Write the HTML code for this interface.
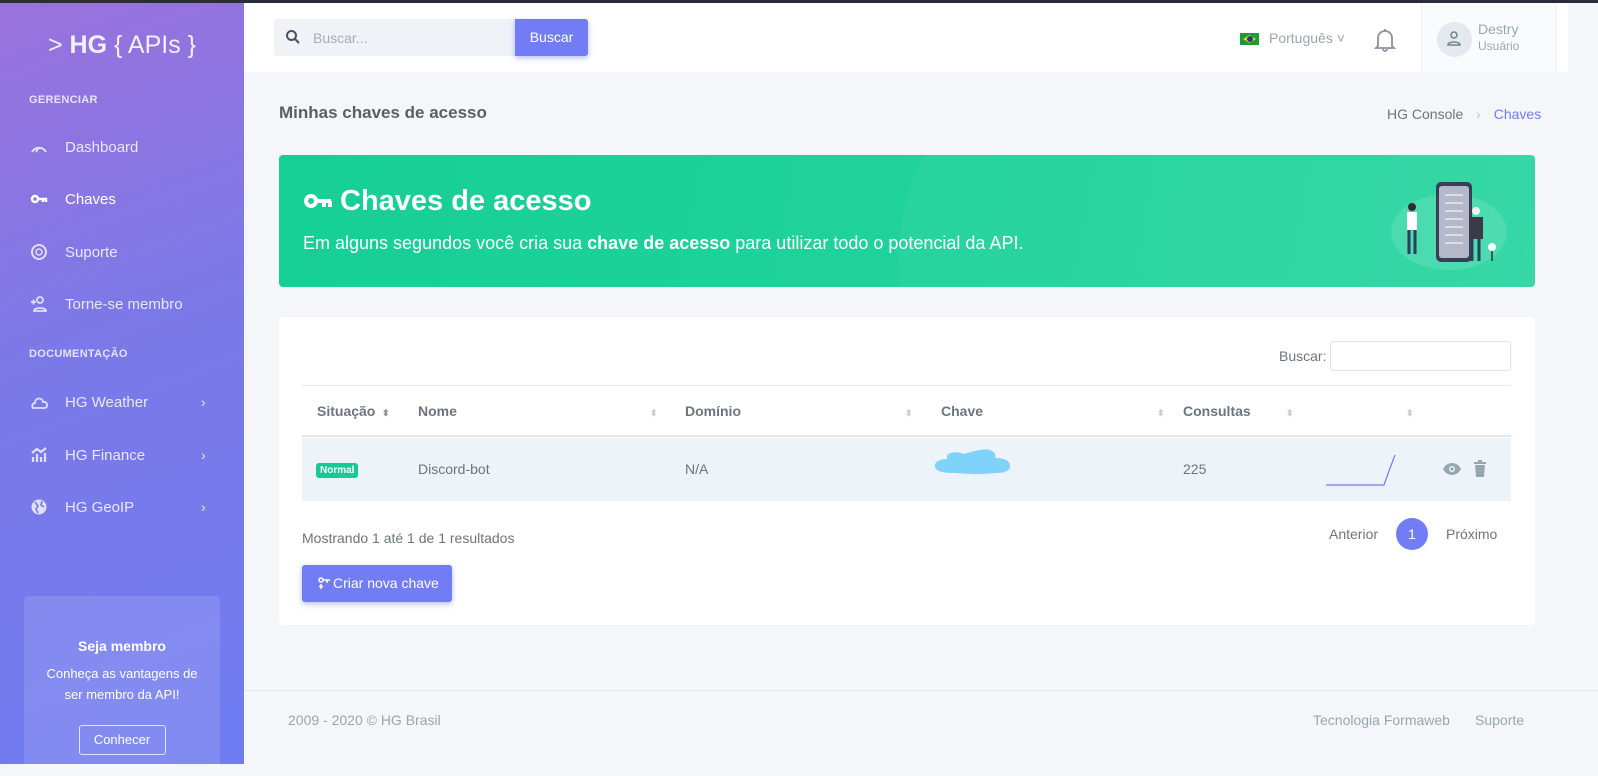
<!DOCTYPE html>
<html><head><meta charset="utf-8"><style>
*{box-sizing:border-box;margin:0;padding:0}
html{background:#f5f6fa}
body{width:1598px;height:764px;overflow:hidden;font-family:"Liberation Sans",sans-serif;background:#f5f6fa;position:relative;color:#495057}
.topline{position:absolute;left:0;top:0;width:1598px;height:3px;background:#2a2d38;z-index:5}
.side{position:absolute;left:0;top:3px;width:244px;height:761px;background:linear-gradient(160deg,#9a72dc 0%,#7b79e8 45%,#6f7cf2 100%);color:#fff}
.logo{position:absolute;top:28px;left:0;width:244px;text-align:center;font-size:25px;color:#f0f0ff}
.logo b{font-weight:bold}
.sec{position:absolute;left:29px;font-size:11px;font-weight:bold;color:#e4e2ff;letter-spacing:.3px}
.item{position:absolute;left:29px;font-size:15px;color:#e8e8ff;display:flex;align-items:center}
.item svg{width:20px;height:20px;margin-right:16px}
.item .ch{position:absolute;left:172px;font-size:14px}
.card{position:absolute;left:24px;top:593px;width:196px;height:180px;background:rgba(255,255,255,.12);border-radius:5px;text-align:center;color:#fff}
.top{position:absolute;left:244px;top:3px;width:1324px;height:69px;background:#fff}
.search{position:absolute;left:30px;top:16px;width:241px;height:37px;background:#eff2f7;border-radius:3px 0 0 3px}
.btn{position:absolute;left:271px;top:16px;width:73px;height:37px;background:#727cf5;color:#fff;font-size:14px;text-align:center;line-height:37px;border-radius:0 3px 3px 0;box-shadow:0 2px 6px rgba(114,124,245,.5)}
.user{position:absolute;left:1177px;top:0;width:136px;height:69px;background:#fafbfd;border-left:1px solid #eef0f4;border-right:1px solid #eef0f4}
.banner{position:absolute;left:279px;top:155px;width:1256px;height:132px;background:linear-gradient(100deg,#16cf95 0%,#20d39a 55%,#2fd6a3 100%);border-radius:4px;color:#fff;overflow:hidden}
.panel{position:absolute;left:279px;top:317px;width:1256px;height:308px;background:#fff;border-radius:4px}
.foot{position:absolute;left:244px;top:690px;width:1354px;height:74px;border-top:1px solid #e4e6ee;font-size:14px;color:#98a6ad}
.arr{color:#c8ccd4;font-size:9px;position:absolute;top:22px}
</style></head><body>
<div class="topline"></div>
<div class="side">
 <div class="logo">&gt; <b>HG</b> { APIs }</div>
 <div class="sec" style="top:91px">GERENCIAR</div>
 <div class="item" style="top:134px"><svg viewBox="0 0 20 20"><path d="M3 15a8 8 0 0 1 14 0M7 15l3-5" stroke="#e0e0ff" stroke-width="2" fill="none"/></svg>Dashboard</div>
 <div class="item" style="top:186px;color:#fff"><svg viewBox="0 0 20 20"><circle cx="6" cy="10" r="3" stroke="#fff" stroke-width="2.5" fill="none"/><path d="M9 10h9M14 10v3M17 10v3" stroke="#fff" stroke-width="2.5"/></svg>Chaves</div>
 <div class="item" style="top:239px"><svg viewBox="0 0 20 20"><circle cx="10" cy="10" r="7" stroke="#e0e0ff" stroke-width="2" fill="none"/><circle cx="10" cy="10" r="3" stroke="#e0e0ff" stroke-width="1.5" fill="none"/></svg>Suporte</div>
 <div class="item" style="top:291px"><svg viewBox="0 0 20 20"><circle cx="11" cy="6" r="3" stroke="#e0e0ff" stroke-width="1.8" fill="none"/><path d="M5 17c0-4 12-4 12 0zM2 8h5M4.5 5.5v5" stroke="#e0e0ff" stroke-width="1.8" fill="none"/></svg>Torne-se membro</div>
 <div class="sec" style="top:345px">DOCUMENTAÇÃO</div>
 <div class="item" style="top:389px"><svg viewBox="0 0 20 20"><path d="M4 16h12a3 3 0 0 0-2-6 4 4 0 0 0-8 1 3 3 0 0 0-2 5z" stroke="#e0e0ff" stroke-width="1.8" fill="none"/></svg>HG Weather<span class="ch">›</span></div>
 <div class="item" style="top:442px"><svg viewBox="0 0 20 20"><path d="M4 17v-5M8 17v-8M12 17v-5M16 17v-9M3 8l5-4 4 3 5-4" stroke="#e0e0ff" stroke-width="2.2" fill="none"/></svg>HG Finance<span class="ch">›</span></div>
 <div class="item" style="top:494px"><svg viewBox="0 0 20 20"><circle cx="10" cy="10" r="7.5" fill="#e0e0ff"/><path d="M6 5l3 4-2 3 2 4M13 4l-1 4 3 2" stroke="#7a79ea" stroke-width="1.6" fill="none"/></svg>HG GeoIP<span class="ch">›</span></div>
 <div class="card">
  <div style="margin-top:42px;font-weight:bold;font-size:14px">Seja membro</div>
  <div style="margin-top:9px;font-size:13px;line-height:21px">Conheça as vantagens de<br>ser membro da API!</div>
  <div style="margin:20px auto 0;width:87px;height:30px;border:1px solid #e4e4ff;border-radius:3px;font-size:13px;line-height:28px">Conhecer</div>
 </div>
</div>
<div class="top">
 <div class="search"><svg style="position:absolute;left:11px;top:10px" width="16" height="16" viewBox="0 0 16 16"><circle cx="6.5" cy="6.5" r="4.5" stroke="#4a5060" stroke-width="2" fill="none"/><path d="M10 10l4 4" stroke="#4a5060" stroke-width="2"/></svg><span style="position:absolute;left:39px;top:11px;font-size:14px;color:#a6adb8">Buscar...</span></div>
 <div class="btn">Buscar</div>
 <div style="position:absolute;left:996px;top:30px;width:19px;height:12px;background:#1e9a3a"><div style="position:absolute;left:3px;top:2px;width:13px;height:8px;background:#f5d400;clip-path:polygon(50% 0,100% 50%,50% 100%,0 50%)"></div><div style="position:absolute;left:7px;top:3px;width:6px;height:6px;border-radius:50%;background:#1c3f94"></div></div>
 <div style="position:absolute;left:1025px;top:27px;font-size:14px;color:#98a6ad">Português ˅</div>
 <svg style="position:absolute;left:1130px;top:24px" width="22" height="26" viewBox="0 0 22 26"><path d="M4 19V11a7 7 0 0 1 14 0v8l2 2H2zM9 22a2 2 0 0 0 4 0M11 2v2" stroke="#8a929c" stroke-width="1.8" fill="none"/></svg>
 <div class="user">
  <div style="position:absolute;left:15px;top:19px;width:35px;height:35px;border-radius:50%;background:#e4e8ef"></div>
  <svg style="position:absolute;left:24px;top:27px" width="16" height="18" viewBox="0 0 16 18"><circle cx="8" cy="5" r="3" stroke="#7a838d" stroke-width="1.6" fill="none"/><path d="M2 15c0-4 12-4 12 0z" stroke="#7a838d" stroke-width="1.6" fill="none"/></svg>
  <div style="position:absolute;left:56px;top:18px;font-size:14px;color:#98a6ad">Destry</div>
  <div style="position:absolute;left:56px;top:36px;font-size:12px;color:#98a6ad">Usuário</div>
 </div>
</div>
<div style="position:absolute;left:279px;top:103px;font-size:17px;color:#5a5f66;font-weight:bold">Minhas chaves de acesso</div>
<div style="position:absolute;left:1387px;top:106px;font-size:14px;color:#6c757d">HG Console <span style="color:#c0c4ca;margin:0 9px">›</span> <span style="color:#727cf5">Chaves</span></div>
<div class="banner">
 <div style="position:absolute;left:620px;top:-200px;width:900px;height:600px;border-radius:50%;background:rgba(255,255,255,.04)"></div>
 <svg style="position:absolute;left:24px;top:36px" width="30" height="20" viewBox="0 0 30 20"><circle cx="8" cy="10" r="5" stroke="#fff" stroke-width="4" fill="none"/><path d="M13 10h15M21 10v6M27 10v6" stroke="#fff" stroke-width="4"/></svg>
 <div style="position:absolute;left:61px;top:30px;font-size:29px;font-weight:bold">Chaves de acesso</div>
 <div style="position:absolute;left:24px;top:78px;font-size:18px">Em alguns segundos você cria sua <b>chave de acesso</b> para utilizar todo o potencial da API.</div>
 <svg style="position:absolute;left:1110px;top:22px" width="130" height="95" viewBox="0 0 130 95"><ellipse cx="60" cy="55" rx="58" ry="38" fill="rgba(255,255,255,.12)"/><rect x="47" y="5" width="36" height="80" rx="5" fill="#3a3f57"/><rect x="50" y="9" width="30" height="72" rx="3" fill="#b4b8c8"/><g stroke="#e8e8f0" stroke-width="1.5"><path d="M56 18h18M56 26h18M56 34h18M56 42h18M56 50h18M56 58h18M56 66h18"/></g><rect x="18" y="35" width="10" height="18" fill="#fff"/><path d="M20 53v24M26 53v24" stroke="#2c3e5a" stroke-width="3"/><circle cx="23" cy="30" r="4" fill="#2c2c3a"/><rect x="80" y="40" width="14" height="22" fill="#3a3a48"/><path d="M83 62v22M90 62v22" stroke="#2c3e5a" stroke-width="3"/><circle cx="87" cy="34" r="4" fill="#f0f0f0"/><circle cx="103" cy="70" r="4" fill="#fff"/><path d="M103 74v10" stroke="#333" stroke-width="1.5"/></svg>
</div>
<div class="panel">
 <div style="position:absolute;left:1000px;top:31px;font-size:14px;color:#6c757d">Buscar:</div>
 <div style="position:absolute;left:1051px;top:24px;width:181px;height:30px;border:1px solid #dee2e6;border-radius:3px"></div>
 <div style="position:absolute;left:23px;top:68px;width:1209px;height:1px;background:#e6e9ee"></div>
 <div style="position:absolute;left:23px;top:69px;width:1209px;height:51px;border-bottom:2px solid #e3e6ec;font-size:14px;font-weight:bold;color:#6c757d">
  <span style="position:absolute;left:15px;top:17px">Situação</span><span class="arr" style="left:80px;color:#8a929c">⬍</span>
  <span style="position:absolute;left:116px;top:17px">Nome</span><span class="arr" style="left:348px">⬍</span>
  <span style="position:absolute;left:383px;top:17px">Domínio</span><span class="arr" style="left:603px">⬍</span>
  <span style="position:absolute;left:639px;top:17px">Chave</span><span class="arr" style="left:855px">⬍</span>
  <span style="position:absolute;left:881px;top:17px">Consultas</span><span class="arr" style="left:984px">⬍</span><span class="arr" style="left:1104px">⬍</span>
 </div>
 <div style="position:absolute;left:23px;top:121px;width:1209px;height:63px;background:#eef2f9;font-size:14px;color:#6c757d">
  <span style="position:absolute;left:14px;top:25px;background:#17c995;color:#fff;font-size:10px;font-weight:bold;padding:2px 4px;border-radius:3px">Normal</span>
  <span style="position:absolute;left:116px;top:23px">Discord-bot</span>
  <span style="position:absolute;left:383px;top:23px">N/A</span>
  <svg style="position:absolute;left:625px;top:3px" width="100" height="40" viewBox="0 0 100 40"><path d="M20 14c5-4 12-3 17-1 10-3 20-6 26-4 6 2 6 7 5 8 10 0 15 3 15 8 0 5-5 7-15 7-15 2-28 1-40 0-12 0-18-1-20-6-1-6 6-8 12-8z" fill="#7fd3fb"/></svg>
  <span style="position:absolute;left:881px;top:23px">225</span>
  <svg style="position:absolute;left:1020px;top:12px" width="80" height="40" viewBox="0 0 80 40"><path d="M4 35h58l5-14 6-16" stroke="#727cf5" stroke-width="1.2" fill="none"/></svg>
  <svg style="position:absolute;left:1140px;top:23px" width="20" height="16" viewBox="0 0 20 16"><path d="M1 8c4-8 14-8 18 0-4 8-14 8-18 0z" fill="#98a6ad"/><circle cx="10" cy="8" r="3" fill="#eef2f9"/><circle cx="10" cy="8" r="1.6" fill="#98a6ad"/></svg>
  <svg style="position:absolute;left:1171px;top:22px" width="14" height="17" viewBox="0 0 14 17"><path d="M1 2h12v2H1zM5 0h4v2H5zM2 5h10l-1 12H3z" fill="#98a6ad"/></svg>
 </div>
 <div style="position:absolute;left:23px;top:213px;font-size:14px;color:#6c757d">Mostrando 1 até 1 de 1 resultados</div>
 <div style="position:absolute;left:1050px;top:209px;font-size:14px;color:#6c757d">Anterior</div>
 <div style="position:absolute;left:1117px;top:201px;width:32px;height:32px;border-radius:50%;background:#727cf5;color:#fff;font-size:14px;text-align:center;line-height:32px">1</div>
 <div style="position:absolute;left:1167px;top:209px;font-size:14px;color:#6c757d">Próximo</div>
 <div style="position:absolute;left:23px;top:248px;width:150px;height:37px;background:#727cf5;border-radius:3px;color:#fff;font-size:14px;line-height:37px;padding-left:31px;box-shadow:0 2px 6px rgba(114,124,245,.5)"><svg style="position:absolute;left:16px;top:12px" width="12" height="12" viewBox="0 0 12 12"><circle cx="3" cy="3" r="2" stroke="#fff" stroke-width="1.5" fill="none"/><path d="M5 3h7M9 3v3M3 7v5M1 9.5h4" stroke="#fff" stroke-width="1.5"/></svg>Criar nova chave</div>
</div>
<div class="foot">
 <span style="position:absolute;left:44px;top:21px">2009 - 2020 © HG Brasil</span>
 <span style="position:absolute;left:1069px;top:21px">Tecnologia Formaweb</span>
 <span style="position:absolute;left:1231px;top:21px">Suporte</span>
</div>
</body></html>
